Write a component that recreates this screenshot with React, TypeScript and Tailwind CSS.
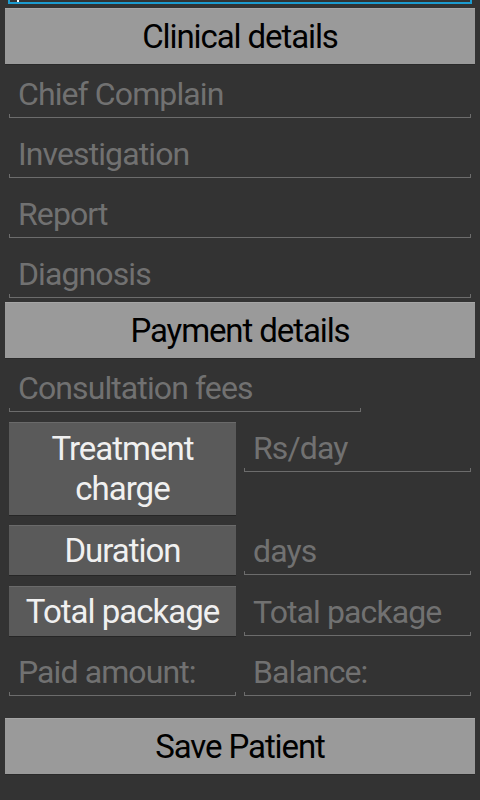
import React from "react";

// holo style edit text: hint + underline with end ticks
const Field = ({ hint, className = "" }: { hint: string; className?: string }) => {
  return (
    <div className={`flex h-[50px] flex-col pt-[7px] ${className}`}>
      <div className="h-[38px] px-[9px] text-[32px] leading-[38px] tracking-[-0.9px] text-[#717171] whitespace-nowrap">
        {hint}
      </div>
      <div className="mt-[1px] h-[4px] border-x border-b border-[#6c6c6c]" />
    </div>
  );
};

const Header = ({ title, className = "" }: { title: string; className?: string }) => {
  return (
    <div
      className={`mx-[5px] flex h-[56px] items-center justify-center border-t border-[#a6a6a6] bg-[#9a9a9a] text-[33px] tracking-[-1.1px] text-black shadow-[0_1px_0_#2a2a2a] ${className}`}
    >
      {title}
    </div>
  );
};

const DarkButton = ({ label, className = "" }: { label: React.ReactNode; className?: string }) => {
  return (
    <div
      className={`flex w-[227px] shrink-0 items-center justify-center border-t border-[#6a6a6a] bg-[#5a5a5a] text-center text-[33px] leading-[40px] tracking-[-1px] text-[#f0f0f0] shadow-[0_1px_0_#262626] ${className}`}
    >
      {label}
    </div>
  );
};

export default function App() {
  return (
    <div className="h-[800px] w-[480px] overflow-hidden bg-[#333333] font-['Roboto',sans-serif]">
      {/* focused input, scrolled mostly off screen */}
      <div className="mx-[8px] -mt-[40px] flex h-[44px] items-end border-2 border-[#1c9cd0]">
        <div className="ml-[7px] h-[2px] w-[2px] bg-white" />
      </div>

      <Header title="Clinical details" className="mt-[4px]" />

      <div className="mx-[9px] mt-[4px] flex flex-col gap-[10px]">
        <Field hint="Chief Complain" />
        <Field hint="Investigation" />
        <Field hint="Report" />
        <Field hint="Diagnosis" />
      </div>

      <Header title="Payment details" className="mt-[4px]" />

      <div className="mx-[9px] mt-[4px] flex flex-col">
        <Field hint="Consultation fees" className="w-[352px]" />

        <div className="mt-[10px] flex gap-[8px]">
          <DarkButton label={<span>Treatment<br />charge</span>} className="h-[93px]" />
          <Field hint="Rs/day" className="flex-1" />
        </div>

        <div className="mt-[10px] flex gap-[8px]">
          <DarkButton label="Duration" className="h-[50px]" />
          <Field hint="days" className="flex-1" />
        </div>

        <div className="mt-[11px] flex gap-[8px]">
          <DarkButton label="Total package" className="h-[50px]" />
          <Field hint="Total package" className="flex-1" />
        </div>

        <div className="mt-[10px] flex gap-[8px]">
          <Field hint="Paid amount:" className="w-[227px]" />
          <Field hint="Balance:" className="flex-1" />
        </div>
      </div>

      <Header title="Save Patient" className="mt-[22px]" />
    </div>
  );
}
